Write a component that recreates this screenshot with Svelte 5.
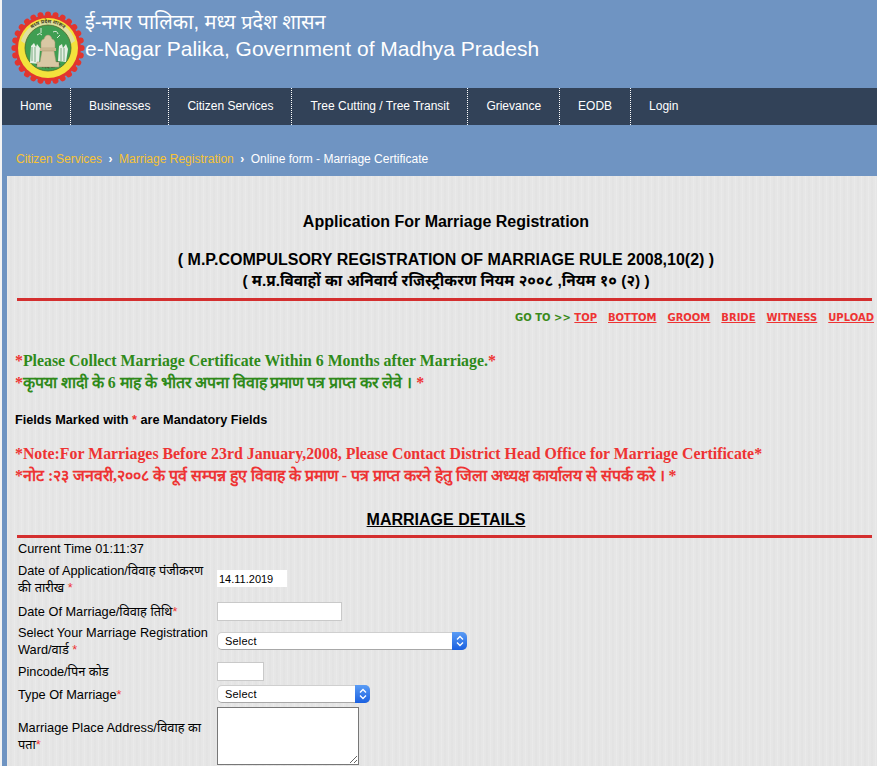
<script>
  const nav = ['Home', 'Businesses', 'Citizen Services', 'Tree Cutting / Tree Transit', 'Grievance', 'EODB', 'Login'];
  const links = ['TOP', 'BOTTOM', 'GROOM', 'BRIDE', 'WITNESS', 'UPLOAD'];
  const teeth = Array.from({ length: 28 }, (_, i) => (i * 360) / 28);
</script>

<div class="page">
  <header class="head">
    <svg class="logo" viewBox="0 0 74 74" aria-hidden="true">
      {#each teeth as a}
        <circle cx="37" cy="3.4" r="3" fill="#e2352e" transform="rotate({a} 37 37)" />
      {/each}
      <circle cx="37" cy="37" r="33" fill="#e2352e" />
      <circle cx="37" cy="37" r="30" fill="#f3e23c" />
      <path d="M10 30 A28 28 0 0 1 64 30 L58 34 A22 22 0 0 0 16 34 Z" fill="#dfe0a0" />
      <circle cx="37" cy="37" r="23" fill="#3f9e52" stroke="#4d6a2a" stroke-width="0.8" />
      <path id="arcTop" d="M12 37 A25 25 0 0 1 62 37" fill="none" />
      <path id="arcBot" d="M17 44 A21.5 21.5 0 0 0 57 44" fill="none" />
      <text class="seal"><textPath href="#arcTop" startOffset="50%" text-anchor="middle">मध्य प्रदेश शासन</textPath></text>
      <text class="seal"><textPath href="#arcBot" startOffset="50%" text-anchor="middle">सत्यमेव जयते</textPath></text>
      <path d="M19 52 l1 -17 3 -3 2 4 1 -3 3 4 -1 16z M47 50 l1 -15 3 -2 1 4 3 -4 2 5 -2 13z" fill="#e6efe4" />
      <path d="M21 36 v14 M24 36 v15 M50 37 v13 M53 37 v13" stroke="#5f9d6b" stroke-width="0.8" />
      <path d="M26 24 q3 -3 5 0 M42 21 q4 -2 5 2 M30 17 v5 M46 27 l3 -3" stroke="#dcebd8" stroke-width="1" fill="none" />
      <path d="M30 31 q1 -3 3 -3 q1 -4 4 -4 q3 0 4 4 q2 0 3 3 v6 h-14z" fill="#d9c8a4" stroke="#a8966f" stroke-width="0.5" />
      <rect x="29" y="37" width="16" height="3" fill="#c9b68f" />
      <path d="M31 40 h12 l2 11 h3 v5 h-22 v-5 h3z" fill="#d9c8a4" stroke="#a8966f" stroke-width="0.5" />
    </svg>
    <div class="titles">
      <div class="hi">ई-नगर पालिका, मध्य प्रदेश शासन</div>
      <div class="en">e-Nagar Palika, Government of Madhya Pradesh</div>
    </div>
  </header>

  <nav class="menu">
    {#each nav as item}
      <a href="#top">{item}</a>
    {/each}
  </nav>

  <div class="crumbs">
    <a href="#top">Citizen Services</a><span class="sep">›</span><a href="#top">Marriage Registration</a><span class="sep">›</span><span class="cur">Online form - Marriage Certificate</span>
  </div>

  <main class="panel">
    <h1 class="t1">Application For Marriage Registration</h1>
    <h2 class="t2">( M.P.COMPULSORY REGISTRATION OF MARRIAGE RULE 2008,10(2) )<br /><span class="t2hi">( म.प्र.विवाहों का अनिवार्य रजिस्ट्रीकरण नियम २००८ ,नियम १० (२) )</span></h2>
    <div class="rule first"></div>

    <div class="goto">
      <b>GO TO &gt;&gt;</b>
      {#each links as l}<a href="#top">{l}</a>{/each}
    </div>

    <p class="big green"><i>*</i>Please Collect Marriage Certificate Within 6 Months after Marriage.<i>*</i><br /><i>*</i>कृपया शादी के 6 माह के भीतर अपना विवाह प्रमाण पत्र प्राप्त कर लेवे । <i>*</i></p>

    <p class="mand">Fields Marked with <i>*</i> are Mandatory Fields</p>

    <p class="big red">*Note:For Marriages Before 23rd January,2008, Please Contact District Head Office for Marriage Certificate*<br />*नोट :२३ जनवरी,२००८ के पूर्व सम्पन्न हुए विवाह के प्रमाण - पत्र प्राप्त करने हेतु जिला अध्यक्ष कार्यालय से संपर्क करे । *</p>

    <h3 class="sect">MARRIAGE DETAILS</h3>
    <div class="rule"></div>

    <div class="form">
      <div class="time">Current Time 01:11:37</div>

      <div class="lab">Date of Application/विवाह पंजीकरण की तारीख <i>*</i></div>
      <div class="fld"><input class="plain" value="14.11.2019" readonly /></div>

      <div class="lab">Date Of Marriage/विवाह तिथि<i>*</i></div>
      <div class="fld"><input class="date" /></div>

      <div class="lab">Select Your Marriage Registration Ward/वार्ड <i>*</i></div>
      <div class="fld">
        <div class="sel wide">Select<span class="arrow"><svg viewBox="0 0 10 14"><path d="M2 5.5 5 2.5 8 5.5M2 8.5 5 11.5 8 8.5" fill="none" stroke="#fff" stroke-width="1.3" /></svg></span></div>
      </div>

      <div class="lab">Pincode/पिन कोड</div>
      <div class="fld"><input class="pin" /></div>

      <div class="lab">Type Of Marriage<i>*</i></div>
      <div class="fld">
        <div class="sel narrow">Select<span class="arrow"><svg viewBox="0 0 10 14"><path d="M2 5.5 5 2.5 8 5.5M2 8.5 5 11.5 8 8.5" fill="none" stroke="#fff" stroke-width="1.3" /></svg></span></div>
      </div>

      <div class="lab">Marriage Place Address/विवाह का पता<i>*</i></div>
      <div class="fld"><textarea></textarea></div>
    </div>
  </main>
</div>

<style>
  :global(body) {
    margin: 0;
    background: #f4f4f4;
    font-family: "Liberation Sans", Arial, "Noto Sans", sans-serif;
  }
  .page {
    height: 766px;
    overflow: hidden;
    margin-left: 2px;
    background: #6f94c2;
  }
  .head {
    height: 88px;
    display: flex;
    align-items: flex-start;
    box-sizing: border-box;
    padding: 11px 0 0 9px;
  }
  .logo {
    width: 74px;
    height: 74px;
    flex: none;
  }
  .seal {
    font-size: 5.2px;
    font-weight: 700;
    fill: #3b3a1c;
  }
  .titles {
    color: #fff;
    line-height: 27px;
  }
  .hi {
    height: 26px;
    font-size: 20px;
    margin-top: -2px;
  }
  .en {
    font-size: 21px;
    white-space: nowrap;
  }
  .menu {
    height: 37px;
    background: #324258;
    display: flex;
  }
  .menu a {
    display: flex;
    align-items: center;
    padding: 0 18px 2px;
    color: #fff;
    font-size: 12px;
    text-decoration: none;
    border-right: 1px dotted #fff;
  }
  .menu a:last-child {
    border-right: 0;
  }
  .crumbs {
    height: 51px;
    box-sizing: border-box;
    padding: 27px 0 0 14px;
    font-size: 12px;
    line-height: 14px;
    color: #fff;
  }
  .crumbs a {
    color: #f7c332;
    text-decoration: none;
  }
  .sep {
    margin: 0 6.5px;
    font-weight: 700;
  }
  .panel {
    margin-left: 5px;
    height: 590px;
    box-sizing: border-box;
    padding: 1px 0 0 8px;
    background-color: #e6e6e6;
    background-image:
      repeating-linear-gradient(90deg, rgba(255, 255, 255, 0.14) 0 1px, transparent 1px 3px, rgba(0, 0, 0, 0.012) 3px 5px, transparent 5px 7px);
    color: #000;
  }
  .t1 {
    margin: 35px 0 0;
    font-size: 16px;
    line-height: 20px;
    text-align: center;
  }
  .t2 {
    margin: 17px 0 0;
    font-size: 16px;
    line-height: 21px;
    text-align: center;
  }
  .t2hi {
    font-size: 15.4px;
  }
  .rule {
    height: 3px;
    background: #d42f2f;
    margin-left: 2px;
    margin-right: 5px;
  }
  .rule.first {
    margin-top: 7px;
  }
  .goto {
    margin-top: 9px;
    height: 15px;
    font-family: "DejaVu Sans", Verdana, sans-serif;
    font-size: 10px;
    line-height: 15px;
    font-weight: 700;
    text-align: right;
    padding-right: 3px;
    color: #3a8a1a;
  }
  .goto a {
    color: #ee3333;
    margin-left: 11px;
  }
  .goto b + a {
    margin-left: 0;
  }
  .big {
    margin: 0;
    font-family: "Liberation Serif", "Times New Roman", serif;
    font-size: 15.85px;
    font-weight: 700;
    line-height: 22px;
  }
  .big i,
  .mand i,
  .lab i {
    font-style: normal;
    color: #ee3333;
  }
  .green {
    margin-top: 25px;
    color: #2f8a1a;
  }
  .red {
    margin-top: 15px;
    color: #ee3333;
  }
  .mand {
    margin: 18px 0 0;
    font-size: 12.7px;
    line-height: 16px;
    font-weight: 700;
  }
  .sect {
    margin: 23px 0 0;
    font-size: 16px;
    line-height: 20px;
    text-align: center;
    text-decoration: underline;
  }
  .sect + .rule {
    margin-top: 5px;
  }
  .form {
    display: grid;
    grid-template-columns: 199px 1fr;
    grid-template-rows: 18px 41px 24px 36px 24px 22px 62px;
    align-items: center;
    padding: 2px 0 0 3px;
    font-size: 12.75px;
    line-height: 17px;
  }
  .time {
    grid-column: 1 / -1;
    line-height: 18px;
  }
  .form .time + .lab,
  .form .time + .lab + .fld {
    margin-top: 3px;
    margin-bottom: 3px;
  }
  .lab {
    padding-right: 4px;
  }
  .fld {
    display: flex;
    align-items: center;
  }
  input,
  textarea {
    box-sizing: border-box;
    background: #fff;
    font-family: inherit;
    font-size: 11px;
    margin: 0;
    border-radius: 0;
  }
  .plain {
    width: 70px;
    height: 17px;
    border: 0;
    padding: 0 2px;
  }
  .date {
    width: 125px;
    height: 19px;
    border: 1px solid #c9c9c9;
  }
  .pin {
    width: 47px;
    height: 19px;
    border: 1px solid #c9c9c9;
  }
  .sel {
    position: relative;
    box-sizing: border-box;
    height: 18px;
    background: #fff;
    border: 1px solid #cfcfcf;
    border-bottom-color: #a8a8a8;
    border-radius: 5px;
    font-size: 11px;
    line-height: 16px;
    padding-left: 7px;
    letter-spacing: 0.2px;
  }
  .wide {
    width: 250px;
  }
  .narrow {
    width: 153px;
  }
  .arrow {
    position: absolute;
    top: -1px;
    right: -1px;
    width: 15px;
    height: 18px;
    border-radius: 0 5px 5px 0;
    background: linear-gradient(#5a9cf5, #1a60e0);
    display: flex;
    align-items: center;
    justify-content: center;
  }
  .arrow svg {
    width: 10px;
    height: 14px;
  }
  textarea {
    display: block;
    width: 142px;
    height: 58px;
    border: 1px solid #777;
    padding: 2px;
  }
</style>
